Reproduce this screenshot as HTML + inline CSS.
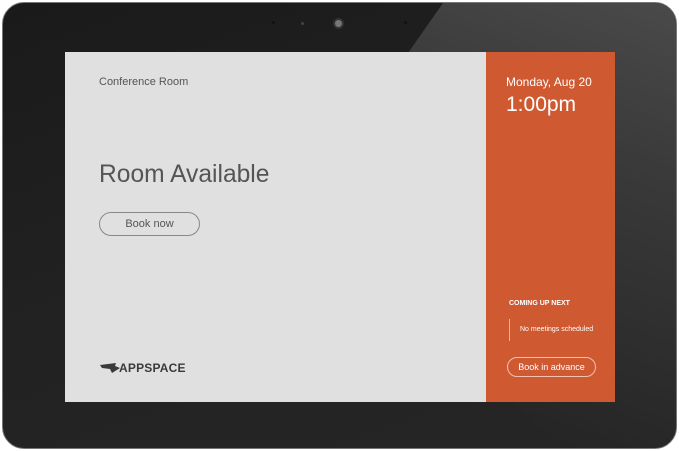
<!DOCTYPE html>
<html><head><meta charset="utf-8"><style>
*{margin:0;padding:0;box-sizing:border-box}
body{width:679px;height:451px;background:#fff;position:relative;overflow:hidden;font-family:"Liberation Sans",sans-serif}
.dev{position:absolute;left:2px;top:2px;width:675px;height:447px;border-radius:22px;background:linear-gradient(160deg,#1a1a1a 0%,#222 50%,#262626 100%);border:1px solid #777;overflow:hidden}
.gloss{position:absolute;left:0;top:0;width:675px;height:447px;background:linear-gradient(200deg,#4a4a4a 0%,#3a3a3a 25%,#2c2c2c 55%,#1e1e1e 85%);clip-path:polygon(440px 0,675px 0,675px 447px,560px 447px,300px 200px)}
.scr{position:absolute;left:65px;top:52px;width:421px;height:350px;background:#e0e0e0}
.side{position:absolute;left:486px;top:52px;width:129px;height:350px;background:#cf5a32;color:#fff}
.dot{position:absolute;border-radius:50%;background:#111}
.t{position:absolute;white-space:nowrap}
.btn{position:absolute;border-radius:14px}
</style></head><body>
<div class="dev"><div class="gloss"></div></div>
<div class="dot" style="left:272px;top:21px;width:3px;height:3px"></div>
<div class="dot" style="left:301px;top:22px;width:3px;height:3px;background:#444"></div>
<div class="dot" style="left:333px;top:18px;width:11px;height:11px;background:#777;border:2px solid #333"></div>
<div class="dot" style="left:404px;top:21px;width:3px;height:3px"></div>
<div class="scr">
<div class="t" style="left:34px;top:24px;font-size:11px;color:#555">Conference Room</div>
<div class="t" style="left:34px;top:109px;font-size:24.6px;color:#555">Room Available</div>
<div class="btn" style="left:34px;top:160px;width:101px;height:24px;border:1px solid #888;font-size:11px;color:#555;text-align:center;line-height:22px">Book now</div>
<svg style="position:absolute;left:35px;top:310px" width="22" height="12" viewBox="0 0 22 12"><path d="M0 3 L16 1 L15 4 L20 6 L12 11 L10 7 L2 6 Z" fill="#3a3a3a"/></svg>
<div class="t" style="left:54px;top:309px;font-size:12px;font-weight:bold;color:#3a3a3a;letter-spacing:0.2px">APPSPACE</div>
</div>
<div class="side">
<div class="t" style="left:20px;top:23px;font-size:12px">Monday, Aug 20</div>
<div class="t" style="left:20px;top:41px;font-size:21px">1:00pm</div>
<div class="t" style="left:23px;top:248px;font-size:7px;font-weight:bold">COMING UP NEXT</div>
<div style="position:absolute;left:23px;top:267px;width:1px;height:22px;background:#f0b09a"></div>
<div class="t" style="left:34px;top:274px;font-size:7px">No meetings scheduled</div>
<div class="btn" style="left:21px;top:305px;width:89px;height:20px;border:1px solid #f0c0b0;font-size:9px;text-align:center;line-height:19px">Book in advance</div>
</div>
</body></html>
